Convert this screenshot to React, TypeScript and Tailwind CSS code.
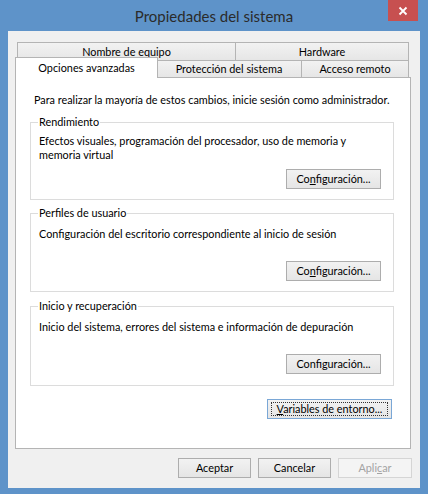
import React from "react";

function Btn({
  children,
  className = "",
  disabled = false,
  focused = false,
}: {
  children: React.ReactNode;
  className?: string;
  disabled?: boolean;
  focused?: boolean;
}) {
  const base = disabled
    ? "border-[#d5d5d5] bg-[#f4f4f4] text-[#a3a3a3]"
    : focused
    ? "border-[#7aa7d6] bg-linear-to-b from-[#f2f2f2] to-[#e5e5e5] text-black"
    : "border-[#adadad] bg-linear-to-b from-[#f2f2f2] to-[#e5e5e5] text-black";
  return (
    <div className={`h-[20px] flex items-center justify-center border ${base} ${className}`}>
      {focused ? (
        <div className="h-[14px] w-[calc(100%-6px)] border border-dotted border-[#333] flex items-center justify-center leading-[12px]">
          {children}
        </div>
      ) : (
        <span className="leading-[14px]">{children}</span>
      )}
    </div>
  );
}

function Group({
  label,
  height,
  children,
  className = "",
}: {
  label: string;
  height: string;
  children: React.ReactNode;
  className?: string;
}) {
  return (
    <div className={`relative w-[364px] border border-[#dcdcdc] ${height} ${className}`}>
      <span className="absolute left-[7px] -top-[8px] px-[1px] bg-white leading-[14px]">
        {label}
      </span>
      {children}
    </div>
  );
}

const Cfg = ({ k }: { k: number }) => (
  <span>
    {k === 2 ? (
      <>
        Confi<span className="underline">g</span>uración...
      </>
    ) : (
      <>
        Co<span className="underline">n</span>figuración...
      </>
    )}
  </span>
);

export default function App() {
  return (
    <div className="w-[428px] h-[494px] bg-[#5e93c9] flex flex-col font-[Lato,sans-serif] text-[10.85px] text-black">
      {/* Title bar */}
      <div className="relative h-[31px] flex items-center justify-center">
        <span className="text-[15px] text-[#2b2b2b] leading-[18px]">Propiedades del sistema</span>
        <div className="absolute top-0 right-[10px] w-[30px] h-[21px] bg-[#c75050] flex items-center justify-center">
          <svg width="10" height="10" viewBox="0 0 10 10">
            <path d="M1.5 1.5 L8.5 8.5 M8.5 1.5 L1.5 8.5" stroke="#ffffff" strokeWidth="1.8" />
          </svg>
        </div>
      </div>

      {/* Client area */}
      <div className="mx-[8px] mb-[6px] flex-1 bg-[#f0f0f0] flex flex-col pl-[7px] pr-[7px] pt-[11px]">
        {/* Tabs row 1 */}
        <div className="flex pl-[2px] h-[18px]">
          <div className="w-[219px] h-[18px] border-t border-l border-r border-[#b4b4b4] bg-linear-to-b from-[#f2f2f2] to-[#e6e6e6] flex items-center justify-center leading-[14px]">
            Nombre de equipo
          </div>
          <div className="w-[174px] -ml-px h-[18px] border-t border-l border-r border-[#b4b4b4] bg-linear-to-b from-[#f2f2f2] to-[#e6e6e6] flex items-center justify-center leading-[14px]">
            Hardware
          </div>
        </div>
        {/* Tabs row 2 */}
        <div className="flex items-end h-[17px]">
          <div className="relative z-10 -mb-px w-[143px] h-[21px] shrink-0 border-t border-l border-r border-[#b4b4b4] bg-white flex items-center justify-center leading-[14px]">
            Opciones avanzadas
          </div>
          <div className="-ml-px w-[145px] h-[17px] shrink-0 border-t border-r border-[#b4b4b4] bg-linear-to-b from-[#f2f2f2] to-[#e6e6e6] flex items-center justify-center leading-[14px]">
            Protección del sistema
          </div>
          <div className="w-[107px] h-[17px] shrink-0 border-t border-r border-[#b4b4b4] bg-linear-to-b from-[#f2f2f2] to-[#e6e6e6] flex items-center justify-center leading-[14px]">
            Acceso remoto
          </div>
        </div>

        {/* Panel */}
        <div className="w-[396px] h-[372px] border border-[#b4b4b4] bg-white flex flex-col pl-[14px]">
          <p className="mt-[15px] pl-[4px] leading-[14px]">
            Para realizar la mayoría de estos cambios, inicie sesión como administrador.
          </p>

          <Group label="Rendimiento" height="h-[78px]" className="mt-[15px]">
            <div className="flex flex-col pl-[8px] pr-[12px] pt-[11px]">
              <p className="leading-[14px]">
                Efectos visuales, programación del procesador, uso de memoria y
                <br />
                memoria virtual
              </p>
              <div className="flex justify-end mt-[7px]">
                <Btn className="w-[95px]">
                  <Cfg k={0} />
                </Btn>
              </div>
            </div>
          </Group>

          <Group label="Perfiles de usuario" height="h-[79px]" className="mt-[13px]">
            <div className="flex flex-col pl-[8px] pr-[12px] pt-[13px]">
              <p className="leading-[14px]">
                Configuración del escritorio correspondiente al inicio de sesión
              </p>
              <div className="flex justify-end mt-[20px]">
                <Btn className="w-[95px]">
                  <Cfg k={1} />
                </Btn>
              </div>
            </div>
          </Group>

          <Group label="Inicio y recuperación" height="h-[80px]" className="mt-[14px]">
            <div className="flex flex-col pl-[8px] pr-[12px] pt-[13px]">
              <p className="leading-[14px]">
                Inicio del sistema, errores del sistema e información de depuración
              </p>
              <div className="flex justify-end mt-[20px]">
                <Btn className="w-[95px]">
                  <Cfg k={2} />
                </Btn>
              </div>
            </div>
          </Group>

          <div className="w-[364px] flex justify-end pr-[2px] mt-[13px]">
            <Btn focused className="w-[125px]">
              <span>
                <span className="underline">V</span>ariables de entorno...
              </span>
            </Btn>
          </div>
        </div>

        {/* Bottom buttons */}
        <div className="flex justify-end gap-[7px] pr-[1px] mt-[9px]">
          <Btn className="w-[73px]">Aceptar</Btn>
          <Btn className="w-[73px]">Cancelar</Btn>
          <Btn disabled className="w-[74px]">
            <span>
              Apli<span className="underline">c</span>ar
            </span>
          </Btn>
        </div>
      </div>
    </div>
  );
}
